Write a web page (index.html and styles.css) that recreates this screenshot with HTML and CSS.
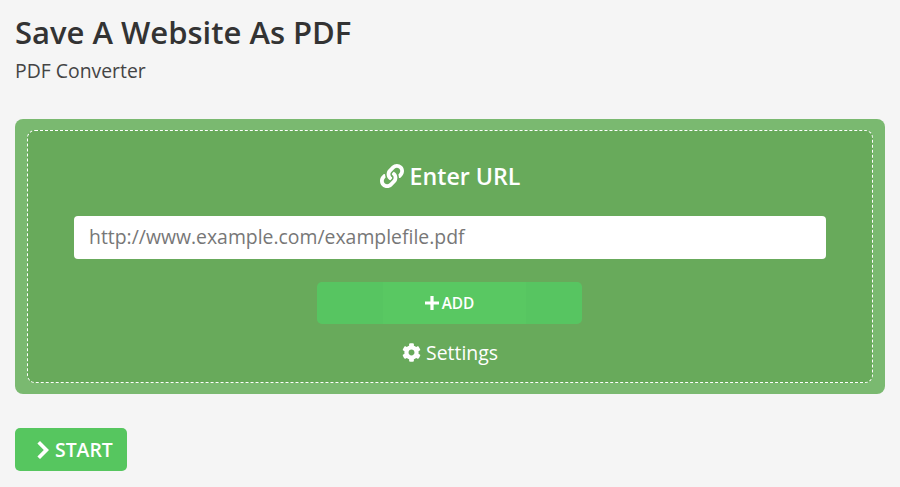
FILE: index.html
```html
<!DOCTYPE html>
<html lang="en">
<head>
    <meta charset="UTF-8">
    <meta name="viewport" content="width=device-width, initial-scale=1.0">
    <title>Save A Website As PDF</title>
    <link rel="stylesheet" href="styles.css">
</head>
<body>
    <h1>Save A Website As PDF</h1>
    <p class="subtitle">PDF Converter</p>

    <div class="panel">
        <div class="dropzone">
            <h2 class="url-title">
                <svg class="icon-link" viewBox="0 0 512 512"><path d="M326.612 185.391c59.747 59.809 58.927 155.698.36 214.59-.11.12-.24.25-.36.37l-67.2 67.2c-59.27 59.27-155.699 59.262-214.96 0-59.27-59.26-59.27-155.7 0-214.96l37.106-37.106c9.84-9.84 26.786-3.3 27.294 10.606.648 17.722 3.826 35.527 9.69 52.721 1.986 5.822.567 12.262-3.783 16.612l-13.087 13.087c-28.026 28.026-28.905 73.66-1.155 101.96 28.024 28.579 74.086 28.749 102.325.51l67.2-67.19c28.191-28.191 28.073-73.757 0-101.83-3.701-3.694-7.429-6.564-10.341-8.569a16.037 16.037 0 0 1-6.947-12.606c-.396-10.567 3.348-21.456 11.698-29.806l21.054-21.055c5.521-5.521 14.182-6.199 20.584-1.731a152.482 152.482 0 0 1 20.522 17.197zM467.547 44.449c-59.261-59.262-155.69-59.27-214.96 0l-67.2 67.2c-.12.12-.25.25-.36.37-58.566 58.892-59.387 154.781.36 214.59a152.454 152.454 0 0 0 20.521 17.196c6.402 4.468 15.064 3.789 20.584-1.731l21.054-21.055c8.35-8.35 12.094-19.239 11.698-29.806a16.037 16.037 0 0 0-6.947-12.606c-2.912-2.005-6.64-4.875-10.341-8.569-28.073-28.073-28.191-73.639 0-101.83l67.2-67.19c28.239-28.239 74.3-28.069 102.325.51 27.75 28.3 26.872 73.934-1.155 101.96l-13.087 13.087c-4.35 4.35-5.769 10.79-3.783 16.612 5.864 17.194 9.042 34.999 9.69 52.721.509 13.906 17.454 20.446 27.294 10.606l37.106-37.106c59.271-59.259 59.271-155.699.001-214.959z"/></svg>
                Enter URL
            </h2>
            <input class="url-input" type="text" placeholder="http://www.example.com/examplefile.pdf">
            <button class="add-btn">
                <svg class="icon-plus" viewBox="0 0 14 14"><path d="M5.4 0h3.2v5.4H14v3.2H8.6V14H5.4V8.6H0V5.4h5.4z"/></svg>
                ADD
            </button>
            <div class="settings">
                <svg class="icon-cog" viewBox="0 0 512 512"><path d="M487.4 315.7l-42.6-24.6c4.3-23.2 4.3-47 0-70.2l42.6-24.6c4.9-2.8 7.1-8.6 5.5-14-11.1-35.6-30-67.8-54.7-94.6-3.8-4.1-10-5.1-14.8-2.3L380.8 110c-17.9-15.4-38.5-27.3-60.8-35.1V25.8c0-5.6-3.9-10.5-9.4-11.7-36.7-8.2-74.3-7.8-109.2 0-5.5 1.2-9.4 6.1-9.4 11.7V75c-22.2 7.9-42.8 19.8-60.8 35.1L88.7 85.5c-4.9-2.8-11-1.9-14.8 2.3-24.7 26.7-43.6 58.9-54.7 94.6-1.7 5.4.6 11.2 5.5 14L67.3 221c-4.3 23.2-4.3 47 0 70.2l-42.6 24.6c-4.9 2.8-7.1 8.6-5.5 14 11.1 35.6 30 67.8 54.7 94.6 3.8 4.1 10 5.1 14.8 2.3l42.6-24.6c17.9 15.4 38.5 27.3 60.8 35.1v49.2c0 5.6 3.9 10.5 9.4 11.7 36.7 8.2 74.3 7.8 109.2 0 5.5-1.2 9.4-6.1 9.4-11.7v-49.2c22.2-7.9 42.8-19.8 60.8-35.1l42.6 24.6c4.9 2.8 11 1.9 14.8-2.3 24.7-26.7 43.6-58.9 54.7-94.6 1.5-5.5-.7-11.3-5.6-14.1zM256 336c-44.1 0-80-35.9-80-80s35.9-80 80-80 80 35.9 80 80-35.9 80-80 80z"/></svg>
                Settings
            </div>
        </div>
    </div>

    <button class="start-btn">
        <svg class="icon-chevron" viewBox="0 0 12 18"><path d="M3 0L12 9L3 18L0.4 15.4L6.8 9L0.4 2.6z"/></svg>
        START
    </button>
</body>
</html>
```

FILE: styles.css
```css
body {
    margin: 0;
    padding: 13px 15px 0;
    font-family: "Open Sans", Arial, sans-serif;
    background-color: #f5f5f5;
    color: #333;
}
h1 {
    margin: 0;
    font-size: 31px;
    line-height: 38px;
    font-weight: 600;
}
.subtitle {
    margin: 7px 0 0;
    font-size: 19.4px;
    line-height: 25px;
    color: #444;
}
.panel {
    margin-top: 36px;
    padding: 11px 12px;
    background-color: #7ab970;
    border-radius: 8px;
}
.dropzone {
    display: flex;
    flex-direction: column;
    align-items: center;
    height: 253px;
    box-sizing: border-box;
    padding: 30px 46px 0;
    background-color: #68aa5b;
    border: 1px dashed #fff;
    border-radius: 8px;
    color: #fff;
}
.url-title {
    display: flex;
    align-items: center;
    gap: 6px;
    margin: 0;
    font-size: 23.2px;
    line-height: 30px;
    font-weight: 600;
}
.icon-link {
    width: 24px;
    height: 24px;
    fill: #fff;
}
.url-input {
    width: 100%;
    height: 43px;
    box-sizing: border-box;
    margin-top: 25px;
    padding: 0 15px 2px;
    font-family: inherit;
    font-size: 19.4px;
    color: #555;
    background-color: #fff;
    border: none;
    border-radius: 4px;
}
.url-input::placeholder {
    color: #777;
    opacity: 1;
}
.add-btn {
    display: flex;
    align-items: center;
    justify-content: center;
    gap: 3px;
    width: 265px;
    height: 42px;
    margin-top: 23px;
    margin-left: -1px;
    font-family: inherit;
    font-size: 15.4px;
    font-weight: 600;
    color: #fff;
    background: linear-gradient(90deg, #57c561 25%, #59c862 25%, #59c862 79%, #57c561 79%);
    border: none;
    border-radius: 5px;
}
.icon-plus {
    width: 14px;
    height: 14px;
    fill: #fff;
}
.settings {
    display: flex;
    align-items: center;
    gap: 5px;
    margin-top: 16px;
    font-size: 19.4px;
    line-height: 25px;
}
.icon-cog {
    width: 19px;
    height: 19px;
    fill: #fff;
}
.start-btn {
    display: flex;
    align-items: center;
    gap: 6px;
    width: 112px;
    height: 43px;
    margin-top: 34px;
    padding: 0 0 0 22px;
    font-family: inherit;
    font-size: 19.4px;
    font-weight: 600;
    color: #fff;
    background-color: #56c65f;
    border: none;
    border-radius: 5px;
}
.icon-chevron {
    width: 12px;
    height: 18px;
    fill: #fff;
}
```
